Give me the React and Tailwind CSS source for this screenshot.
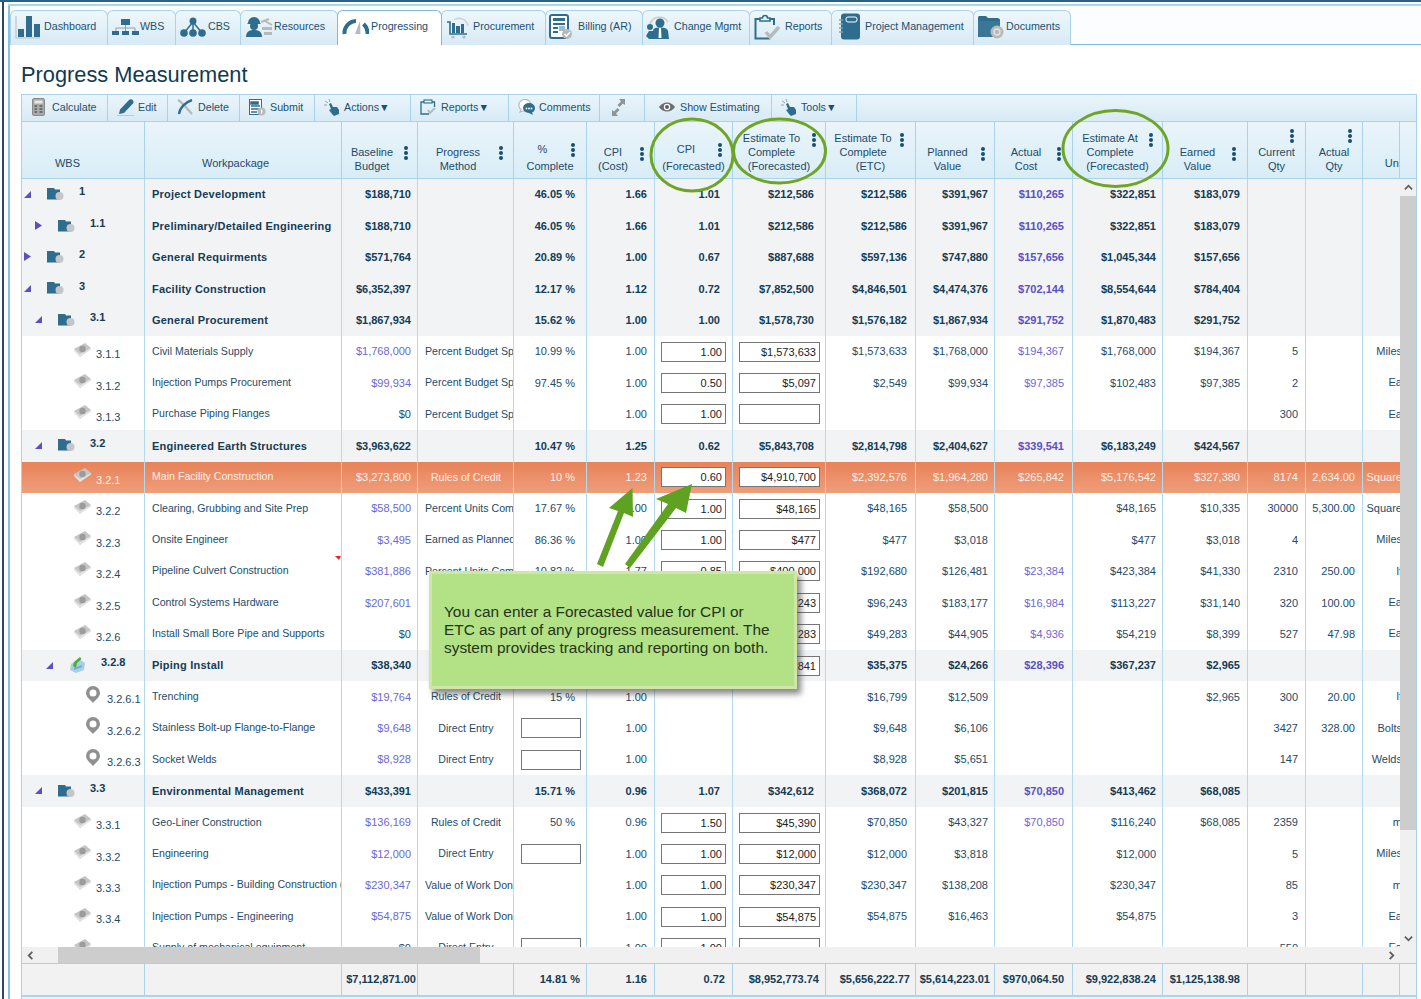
import React from "react";

const B = "#2f6d8e";
const G = "#b7babb";

const Svg = ({ w, h, vb, children }) => (
  <svg width={w} height={h} viewBox={vb || `0 0 ${w} ${h}`} className="block shrink-0">{children}</svg>
);

const Ic = {
  dash: () => (
    <Svg w={26} h={26}>
      <path d="M1 2V24H25" fill="none" stroke="#c9cccd" strokeWidth="1.5" />
      <rect x="3" y="15" width="6" height="8" fill={B} />
      <rect x="11" y="2" width="6" height="21" fill={B} />
      <rect x="19" y="10" width="6" height="13" fill={B} />
    </Svg>
  ),
  wbs: () => (
    <Svg w={27} h={18}>
      <rect x="9" y="1" width="9" height="6" fill={B} />
      <path d="M13.5 7V10M4 13V10H23V13M13.5 10V13" fill="none" stroke="#8f9ea6" strokeWidth="1" />
      <rect x="0" y="13" width="7" height="4" fill={B} />
      <rect x="10" y="13" width="7" height="4" fill={B} />
      <rect x="20" y="13" width="7" height="4" fill={B} />
    </Svg>
  ),
  cbs: () => (
    <Svg w={26} h={22}>
      <path d="M13 6L4 17M13 6V17M13 6L22 17" stroke={B} strokeWidth="1.5" />
      <circle cx="13" cy="5" r="3.5" fill={B} />
      <circle cx="4" cy="17" r="3.8" fill={B} />
      <circle cx="13" cy="17" r="3.8" fill={B} />
      <circle cx="22" cy="17" r="3.8" fill={B} />
    </Svg>
  ),
  res: () => (
    <Svg w={28} h={22}>
      <path d="M16 6L24 3M20 5L27 9" stroke={G} strokeWidth="2" />
      <rect x="17" y="11" width="10" height="3" fill={G} />
      <rect x="19" y="16" width="8" height="3" fill={G} />
      <path d="M3 7A6 6 0 0 1 15 7L16 8H2Z" fill={B} />
      <circle cx="9" cy="10" r="4" fill={B} />
      <path d="M1 21C1 15 5 14 9 14S17 15 17 21Z" fill={B} />
    </Svg>
  ),
  gauge: () => (
    <Svg w={27} h={17}>
      <path d="M2.5 16A12 12 0 0 1 14 3" fill="none" stroke={B} strokeWidth="4" />
      <path d="M13 16L18 3L18.5 16Z" fill={G} />
      <path d="M21.5 6A13 13 0 0 1 25.5 16" fill="none" stroke={B} strokeWidth="4" />
    </Svg>
  ),
  proc: () => (
    <Svg w={24} h={25}>
      <path d="M8 6A9 9 0 0 1 22 12" fill="none" stroke="#cfd2d3" strokeWidth="1.5" />
      <path d="M1 8H4V20H21" fill="none" stroke={B} strokeWidth="1.6" />
      <rect x="6" y="9" width="3" height="10" fill={B} />
      <rect x="10" y="12" width="4" height="7" fill={B} />
      <rect x="15" y="10" width="3" height="9" fill={B} />
      <circle cx="7" cy="23" r="1.6" fill={G} />
      <circle cx="18" cy="23" r="1.6" fill={G} />
    </Svg>
  ),
  bill: () => (
    <Svg w={24} h={26}>
      <rect x="1" y="1" width="18" height="23" rx="2" fill="#fff" stroke={B} strokeWidth="2" />
      <rect x="4" y="4" width="12" height="3" fill={B} />
      <path d="M4 10H16M4 14H9M4 18H9" stroke={B} strokeWidth="2" />
      <rect x="10" y="12" width="6" height="5" fill="#9dbccb" />
      <circle cx="18" cy="20" r="5" fill={G} />
      <path d="M15.5 20L17.5 22L21 18" fill="none" stroke="#fff" strokeWidth="1.3" />
    </Svg>
  ),
  chg: () => (
    <Svg w={25} h={26}>
      <path d="M4 10A10 10 0 0 1 22 8" fill="none" stroke="#c9cccd" strokeWidth="1.6" />
      <circle cx="14" cy="9" r="4.5" fill={B} />
      <path d="M7 25V17C7 14 10 13.5 14 13.5S21 14 22 17L23 25Z" fill={B} />
      <path d="M13 14H15L15.5 24H12.5Z" fill="#fff" />
      <circle cx="4" cy="13" r="3" fill={B} />
      <path d="M0 22L3 17H7L8 25H3Z" fill={B} />
    </Svg>
  ),
  rep: () => (
    <Svg w={26} h={26}>
      <path d="M6 5H1.5V24.5H16M16 5H20V11" fill="none" stroke={B} strokeWidth="2" />
      <path d="M6 7V4H8.5A2.5 2.5 0 0 1 13.500 4H16V7Z" fill="none" stroke={B} strokeWidth="1.6" />
      <path d="M12 18L16 23L25 13" fill="none" stroke={G} strokeWidth="3.4" />
    </Svg>
  ),
  pm: () => (
    <Svg w={22} h={27}>
      <rect x="2" y="0.500" width="19" height="26" rx="3" fill={B} />
      <rect x="7" y="4" width="11" height="5" rx="2" fill="none" stroke="#fff" strokeWidth="1" />
      <path d="M0 7H4M0 11H4M0 15H4M0 19H4" stroke="#7fa4b6" strokeWidth="1.4" />
    </Svg>
  ),
  doc: () => (
    <Svg w={27} h={24}>
      <path d="M1 3C1 1 2 1 3 1H9L11 3H20C22 3 23 4 23 5V22H1Z" fill={B} />
      <rect x="1" y="6" width="22" height="16" fill="#3a7797" />
      <circle cx="20" cy="17" r="6.500" fill={G} />
      <circle cx="20" cy="17" r="3" fill="none" stroke="#e3e3e3" strokeWidth="1.4" />
    </Svg>
  ),
  calc: () => (
    <Svg w={13} h={18}>
      <rect x="0.500" y="0.500" width="12" height="17" rx="1.500" fill="#a9aaa9" stroke="#8a8b8a" />
      <rect x="2.500" y="2.500" width="8" height="3" fill="#e7e7e7" />
      <path d="M2.500 8H5M7.500 8H10.500M2.500 11H5M7.500 11H10.500M2.500 14H5M7.500 14H10.500" stroke="#5a5a5a" strokeWidth="1.600" />
    </Svg>
  ),
  edit: () => (
    <Svg w={18} h={18}>
      <path d="M3 11.500L12 2C13 1 15 1 16 2.500S16.500 5 16 5.500L7 15L2 16Z" fill={B} />
      <path d="M0 17.500H17" stroke="#c5c8c9" strokeWidth="1" />
    </Svg>
  ),
  del: () => (
    <Svg w={16} h={16}>
      <path d="M1 1C5 3 11 11 15 15" stroke={G} strokeWidth="2.400" fill="none" />
      <path d="M15 1C9 3 3 8 2 15" stroke={B} strokeWidth="2.400" fill="none" />
    </Svg>
  ),
  sub: () => (
    <Svg w={17} h={17}>
      <rect x="0.500" y="0.500" width="12" height="15" fill="#fff" stroke={B} />
      <path d="M2 3H9V5H2ZM2 7H11M2 10H11M2 13H8" stroke={B} strokeWidth="1.500" fill={B} />
      <circle cx="12.500" cy="12.500" r="4" fill={G} />
      <rect x="12" y="10.500" width="1.300" height="4" fill="#fff" />
    </Svg>
  ),
  hand: () => (
    <Svg w={17} h={17}>
      <path d="M1 2L4 4M0 6H3M5 0L6 3" stroke="#9da3a6" strokeWidth="1" />
      <path d="M5 5L7 4L9 8L13 8L15 11L15 15L10 17L8 15L5 11L7 10Z" fill={B} />
    </Svg>
  ),
  rep2: () => (
    <Svg w={16} h={16}>
      <path d="M4 3H1V15H9M12 3H14.500V8" fill="none" stroke={B} strokeWidth="1.300" />
      <rect x="4" y="1" width="8" height="3" fill="none" stroke={B} strokeWidth="1.100" />
      <path d="M8 11L10 14L15 9" fill="none" stroke={G} strokeWidth="2" />
    </Svg>
  ),
  com: () => (
    <Svg w={17} h={16}>
      <path d="M1 7A6 5.500 0 0 1 13 5L10 12H5L2 13L3 10.500C1.500 9.500 1 8.500 1 7Z" fill="#fff" stroke={G} strokeWidth="1.200" />
      <path d="M5 9A6 5 0 0 1 17 9C17 11.500 15.500 13 14 13.500L15 16L11 14A6 5 0 0 1 5 9Z" fill={B} />
      <circle cx="8.500" cy="9.500" r="0.900" fill="#fff" />
      <circle cx="11" cy="9.500" r="0.900" fill="#fff" />
      <circle cx="13.500" cy="9.500" r="0.900" fill="#fff" />
    </Svg>
  ),
  exp: () => (
    <Svg w={13} h={17}>
      <path d="M7 0H13V6L11 4.500L7.500 8L5.500 6L9 2.500Z" fill="#8f9496" />
      <path d="M6 17H0V11L2 12.500L5.500 9L7.500 11L4 14.500Z" fill="#8f9496" />
    </Svg>
  ),
  eye: () => (
    <Svg w={16} h={10}>
      <path d="M0 5C4 -1 12 -1 16 5C12 11 4 11 0 5Z" fill="#6b6f71" />
      <circle cx="8" cy="5" r="3.200" fill="#fff" />
      <circle cx="8" cy="5" r="2" fill="#5c6062" />
    </Svg>
  ),
};

const Folder = () => (
  <Svg w={17} h={12}>
    <path d="M0 0H7L8 1.500H13V11.500H0Z" fill={B} />
    <circle cx="12.500" cy="8" r="4" fill="#c4c6c7" />
  </Svg>
);
const GreenBox = () => (
  <Svg w={17} h={16}>
    <path d="M2 7L10 2L16 6L15 13L7 16L1 13Z" fill="#a9cfe4" />
    <path d="M4 9L5 5L11 0L12.500 2L8 6L7 11Z" fill="#48b13c" />
    <path d="M5 12L13 9" stroke="#6ba7c9" strokeWidth="1.500" />
  </Svg>
);
const Leaf = () => (
  <Svg w={17} h={14}>
    <path d="M0 6L11 0L17 5L6 14Z" fill="#c4c5c5" />
    <path d="M0 6L6 11L17 5V6.500L6 14L0 8Z" fill="#e2e2e2" />
    <circle cx="8.500" cy="6" r="3.200" fill="#9b9c9c" />
  </Svg>
);
const Pin = () => (
  <Svg w={14} h={17}>
    <path fillRule="evenodd" d="M7 0A7 7 0 0 1 14 7C14 11 9.500 14 7 17C4.500 14 0 11 0 7A7 7 0 0 1 7 0ZM7 3.500A3.500 3.500 0 1 0 7 10.500A3.500 3.500 0 1 0 7 3.500Z" fill="#8f9090" />
  </Svg>
);

const Kebab = ({ cls }) => (
  <div className={`absolute flex flex-col gap-[1.5px] ${cls}`}>
    <span className="block w-[3.5px] h-[3.5px] rounded-full bg-[#17506f]" />
    <span className="block w-[3.5px] h-[3.5px] rounded-full bg-[#17506f]" />
    <span className="block w-[3.5px] h-[3.5px] rounded-full bg-[#17506f]" />
  </div>
);

const tabs = [
  ["Dashboard", "w-[98px]", Ic.dash, "pl-[4px]", "w-[29px]"],
  ["WBS", "w-[69px]", Ic.wbs, "pl-[4px]", "w-[28px]"],
  ["CBS", "w-[66px]", Ic.cbs, "pl-[4px]", "w-[28px]"],
  ["Resources", "w-[98px]", Ic.res, "pl-[4px]", "w-[29px]"],
  ["Progressing", "w-[105px]", Ic.gauge, "pl-[4px]", "w-[29px]"],
  ["Procurement", "w-[105px]", Ic.proc, "pl-[4px]", "w-[27px]"],
  ["Billing (AR)", "w-[98px]", Ic.bill, "pl-[3px]", "w-[29px]"],
  ["Change Mgmt", "w-[108px]", Ic.chg, "pl-[3px]", "w-[28px]"],
  ["Reports", "w-[83px]", Ic.rep, "pl-[4px]", "w-[31px]"],
  ["Project Management", "w-[143px]", Ic.pm, "pl-[7px]", "w-[26px]"],
  ["Documents", "w-[98px]", Ic.doc, "pl-[3px]", "w-[29px]"],
];

const tools = [
  ["Calculate", "w-[86px]", Ic.calc, "pl-[10px]", "w-[20px]"],
  ["Edit", "w-[60px]", Ic.edit, "pl-[9px]", "w-[21px]"],
  ["Delete", "w-[72px]", Ic.del, "pl-[9px]", "w-[21px]"],
  ["Submit", "w-[75px]", Ic.sub, "pl-[9px]", "w-[21px]"],
  ["Actions▼", "w-[96px]", Ic.hand, "pl-[9px]", "w-[20px]"],
  ["Reports▼", "w-[98px]", Ic.rep2, "pl-[9px]", "w-[21px]"],
  ["Comments", "w-[91px]", Ic.com, "pl-[9px]", "w-[21px]"],
  ["", "w-[45px]", Ic.exp, "pl-[12px]", "w-[21px]"],
  ["Show Estimating", "w-[127px]", Ic.eye, "pl-[14px]", "w-[21px]"],
  ["Tools▼", "w-[85px]", Ic.hand, "pl-[9px]", "w-[20px]"],
];

const COLS =
  "grid grid-cols-[123px_197px_76px_96px_73px_68px_78px_93px_90px_79px_78px_90px_85px_58px_57px_60px]";

const heads = [
  { l: [["WBS"]], pb: "pb-[8px] pr-[31px]" },
  { l: [["Workpackage"]], pb: "pb-[8px] pr-[15px]" },
  { l: [["Baseline", 1], ["Budget", 1]], k: "left-[62px] top-[24px]" },
  { l: [["Progress", 1], ["Method", 1]], k: "left-[81px] top-[24px]" },
  { l: [["%", 2], ["Complete"]], k: "left-[57px] top-[21px]", gap: true },
  { l: [["CPI", 1], ["(Cost)", 1]], k: "left-[53px] top-[25px]" },
  { l: [["CPI", 2], ["(Forecasted)"]], k: "left-[63px] top-[21px]", gap: true },
  { l: [["Estimate To", 1], ["Complete", 1], ["(Forecasted)"]], k: "left-[79px] top-[11px]" },
  { l: [["Estimate To", 1], ["Complete", 1], ["(ETC)"]], k: "left-[74px] top-[11px]" },
  { l: [["Planned", 1], ["Value", 1]], k: "left-[65px] top-[25px]" },
  { l: [["Actual", 1], ["Cost", 1]], k: "left-[62px] top-[25px]" },
  { l: [["Estimate At", 1], ["Complete", 1], ["(Forecasted)"]], k: "left-[76px] top-[11px]" },
  { l: [["Earned", 1], ["Value", 1]], k: "left-[69px] top-[25px]" },
  { l: [["Current"], ["Qty"]], k: "left-[42px] top-[7px]" },
  { l: [["Actual"], ["Qty"]], k: "left-[42px] top-[7px]" },
  { l: [["Unit"]], pb: "pb-[8px] pl-[4px]" },
];

// level, open, code, name, baseline, method, pct, cpi, cpiF, etcF, etc, pv, ac, eac, ev, cq, aq, unit
const g = (lvl, open, code, name, base, pct, cpi, cpiF, etcF, etc, pv, ac, eac, ev) => ({
  t: "g", lvl, open, code, name, v: [base, "", pct, cpi, cpiF, etcF, etc, pv, ac, eac, ev, "", "", ""],
});
const l = (code, name, ...v) => ({ t: "l", code, name, v });
const p = (code, name, ...v) => ({ t: "p", code, name, v });

const rows = [
  g(0, true, "1", "Project Development", "$188,710", "46.05 %", "1.66", "1.01", "$212,586", "$212,586", "$391,967", "$110,265", "$322,851", "$183,079"),
  g(1, false, "1.1", "Preliminary/Detailed Engineering", "$188,710", "46.05 %", "1.66", "1.01", "$212,586", "$212,586", "$391,967", "$110,265", "$322,851", "$183,079"),
  g(0, false, "2", "General Requirments", "$571,764", "20.89 %", "1.00", "0.67", "$887,688", "$597,136", "$747,880", "$157,656", "$1,045,344", "$157,656"),
  g(0, true, "3", "Facility Construction", "$6,352,397", "12.17 %", "1.12", "0.72", "$7,852,500", "$4,846,501", "$4,474,376", "$702,144", "$8,554,644", "$784,404"),
  g(1, true, "3.1", "General Procurement", "$1,867,934", "15.62 %", "1.00", "1.00", "$1,578,730", "$1,576,182", "$1,867,934", "$291,752", "$1,870,483", "$291,752"),
  l("3.1.1", "Civil Materials Supply", "$1,768,000", "Percent Budget Spent", "10.99 %", "1.00", "#1.00", "#$1,573,633", "$1,573,633", "$1,768,000", "$194,367", "$1,768,000", "$194,367", "5", "", "Miles"),
  l("3.1.2", "Injection Pumps Procurement", "$99,934", "Percent Budget Spent", "97.45 %", "1.00", "#0.50", "#$5,097", "$2,549", "$99,934", "$97,385", "$102,483", "$97,385", "2", "", "Ea"),
  l("3.1.3", "Purchase Piping Flanges", "$0", "Percent Budget Spent", "", "1.00", "#1.00", "#", "", "", "", "", "", "300", "", "Ea"),
  g(1, true, "3.2", "Engineered Earth Structures", "$3,963,622", "10.47 %", "1.25", "0.62", "$5,843,708", "$2,814,798", "$2,404,627", "$339,541", "$6,183,249", "$424,567"),
  { ...l("3.2.1", "Main Facility Construction", "$3,273,800", "Rules of Credit", "10 %", "1.23", "#0.60", "#$4,910,700", "$2,392,576", "$1,964,280", "$265,842", "$5,176,542", "$327,380", "8174", "2,634.00", "Square"), sel: true },
  l("3.2.2", "Clearing, Grubbing and Site Prep", "$58,500", "Percent Units Complete", "17.67 %", "1.00", "#1.00", "#$48,165", "$48,165", "$58,500", "", "$48,165", "$10,335", "30000", "5,300.00", "Square"),
  l("3.2.3", "Onsite Engineer", "$3,495", "Earned as Planned", "86.36 %", "1.00", "#1.00", "#$477", "$477", "$3,018", "", "$477", "$3,018", "4", "", "Miles"),
  { ...l("3.2.4", "Pipeline Culvert Construction", "$381,886", "Percent Units Complete", "10.82 %", "1.77", "#0.85", "#$400,000", "$192,680", "$126,481", "$23,384", "$423,384", "$41,330", "2310", "250.00", "lf"), mark: true },
  l("3.2.5", "Control Systems Hardware", "$207,601", "", "", "", "", "#$96,243", "$96,243", "$183,177", "$16,984", "$113,227", "$31,140", "320", "100.00", "Ea"),
  l("3.2.6", "Install Small Bore Pipe and Supports", "$0", "", "", "", "", "#$49,283", "$49,283", "$44,905", "$4,936", "$54,219", "$8,399", "527", "47.98", "Ea"),
  { ...g(2, true, "3.2.8", "Piping Install", "$38,340", "", "", "", "#$331,841", "$35,375", "$24,266", "$28,396", "$367,237", "$2,965"), green: true },
  p("3.2.6.1", "Trenching", "$19,764", "Rules of Credit", "15 %", "1.00", "", "", "$16,799", "$12,509", "", "", "$2,965", "300", "20.00", "lf"),
  p("3.2.6.2", "Stainless Bolt-up Flange-to-Flange", "$9,648", "Direct Entry", "#", "1.00", "", "", "$9,648", "$6,106", "", "", "", "3427", "328.00", "Bolts"),
  p("3.2.6.3", "Socket Welds", "$8,928", "Direct Entry", "#", "1.00", "", "", "$8,928", "$5,651", "", "", "", "147", "", "Welds"),
  g(1, true, "3.3", "Environmental Management", "$433,391", "15.71 %", "0.96", "1.07", "$342,612", "$368,072", "$201,815", "$70,850", "$413,462", "$68,085"),
  l("3.3.1", "Geo-Liner Construction", "$136,169", "Rules of Credit", "50 %", "0.96", "#1.50", "#$45,390", "$70,850", "$43,327", "$70,850", "$116,240", "$68,085", "2359", "", "m"),
  l("3.3.2", "Engineering", "$12,000", "Direct Entry", "#", "1.00", "#1.00", "#$12,000", "$12,000", "$3,818", "", "$12,000", "", "5", "", "Miles"),
  l("3.3.3", "Injection Pumps - Building Construction (", "$230,347", "Value of Work Done", "", "1.00", "#1.00", "#$230,347", "$230,347", "$138,208", "", "$230,347", "", "85", "", "m"),
  l("3.3.4", "Injection Pumps - Engineering", "$54,875", "Value of Work Done", "", "1.00", "#1.00", "#$54,875", "$54,875", "$16,463", "", "$54,875", "", "3", "", "Ea"),
  l("3.3.5", "Supply of mechanical equipment", "$0", "Direct Entry", "#", "1.00", "#1.00", "#", "", "", "", "", "", "550", "", "Ea"),
];

const pads = [
  "pr-[6px]", "", "pr-[11px]", "pr-[7px]", "pr-[12px]", "pr-[11px]", "pr-[8px]", "pr-[6px]", "pr-[8px]", "pr-[6px]", "pr-[7px]", "pr-[7px]", "pr-[7px]", "",
];
const inpCls = ["", "", "w-[60px] ml-[7px]", "", "w-[65px] ml-[6px]", "w-[81px] ml-[6px]"];

const Input = ({ v, cls }) => (
  <input
    readOnly
    value={v}
    className={`block h-[20px] bg-white border border-[#767676] pr-[3px] text-right text-[11px] text-[#222] font-normal outline-none ${cls}`}
  />
);

const Row = ({ r }) => {
  const sel = r.sel;
  const group = r.t === "g";
  const bg = sel
    ? "bg-gradient-to-b from-[#e8825a] to-[#ee9e7a] text-[#fdeee6]"
    : group
    ? "bg-[#f1f3f5] text-[#143c55] font-bold"
    : "bg-white text-[#1d4b68]";
  const lvlPad = group ? ["pl-[2px]", "pl-[13px]", "pl-[24px]"][r.lvl] : "";
  return (
    <div className={`${COLS} h-[31.4px] ${bg}`}>
      <div className="border-r border-[#b4daed] flex items-center overflow-hidden">
        {group ? (
          <div className={`flex items-center ${lvlPad}`}>
            <div className="w-[7px] mb-[1px]">
              {r.open ? (
                <Svg w={7} h={7}><path d="M7 0V7H0Z" fill="#5a50c4" /></Svg>
              ) : (
                <Svg w={7} h={9}><path d="M0 0L7 4.500L0 9Z" fill="#5a50c4" /></Svg>
              )}
            </div>
            <div className="ml-[16px] mb-[1px]">{r.green ? <GreenBox /> : <Folder />}</div>
            <div className="ml-[15px] mb-[6px] text-[11px]">{r.code}</div>
          </div>
        ) : r.t === "l" ? (
          <div className="flex items-center pl-[52px]">
            <div className="mb-[4px]"><Leaf /></div>
            <div className="ml-[5px] mt-[6px]">{r.code}</div>
          </div>
        ) : (
          <div className="flex items-center pl-[64px]">
            <div className="mb-[5px]"><Pin /></div>
            <div className="ml-[7px] mt-[5px]">{r.code}</div>
          </div>
        )}
      </div>
      <div className={`relative border-r border-[#b4daed] flex items-center pl-[7px] whitespace-nowrap overflow-hidden ${group ? "tracking-[0.22px]" : "text-[10.6px]"}`}>
        {r.name}
        {r.mark && (
          <div className="absolute top-0 right-0">
            <Svg w={6} h={4}><path d="M0 0H6L4 4Z" fill="#e8232a" /></Svg>
          </div>
        )}
      </div>
      {r.v.map((v, i) => {
        const isMethod = i === 1;
        const isUnit = i === 13;
        const isInput = typeof v === "string" && v.startsWith("#");
        const link = !group && !sel && ((i === 0 && v !== "$0") || i === 8);
        const linkB = group && i === 8;
        const color = link ? "text-[#6c68d4]" : linkB ? "text-[#5a50c4]" : "";
        if (isMethod)
          return (
            <div key={i} className="border-r border-[#b4daed] leading-[31.4px] pl-[7px] pr-[6px] text-[10.6px] text-center whitespace-nowrap overflow-hidden">
              {v}
            </div>
          );
        if (isUnit)
          return (
            <div key={i} className="leading-[31.4px] pr-[21px] text-right whitespace-nowrap overflow-hidden">
              {v}
            </div>
          );
        if (isInput)
          return (
            <div key={i} className="border-r border-[#b4daed] flex items-center">
              <Input v={v.slice(1)} cls={inpCls[i]} />
            </div>
          );
        return (
          <div key={i} className={`border-r border-[#b4daed] flex items-center justify-end whitespace-nowrap ${pads[i]} ${color}`}>
            {v}
          </div>
        );
      })}
    </div>
  );
};

const foot = ["", "", "$7,112,871.00", "", "14.81 %", "1.16", "0.72", "$8,952,773.74", "$5,656,222.77", "$5,614,223.01", "$970,064.50", "$9,922,838.24", "$1,125,138.98", "", "", ""];
const footPad = ["", "", "pr-[1px]", "", "pr-[6px]", "pr-[7px]", "pr-[7px]", "pr-[6px]", "pr-[5px]", "pr-[4px]", "pr-[8px]", "pr-[6px]", "pr-[7px]", "", "", ""];

const Chevron = ({ d }) => (
  <svg width="9" height="9" viewBox="0 0 10 10" className="block">
    <path d={d} fill="none" stroke="#5f5f5f" strokeWidth="2" />
  </svg>
);

export default function App() {
  return (
    <div className="relative w-[1421px] h-[999px] overflow-hidden bg-white font-['Liberation_Sans',Arial,sans-serif] text-[11px] flex flex-col">
      <div className="h-[2px] bg-[#2a6283] shrink-0" />
      <div className="flex flex-1 min-h-0">
        <div className="w-[8px] shrink-0 pl-[2px]">
          <div className="w-[1.5px] h-full bg-[#2c4a5e]" />
        </div>
        <div className="flex-1 min-w-0 flex flex-col">
          <div className="h-[2px] mt-[2px] bg-[#a9d6ea] shrink-0" />
          <div className="flex-1 min-h-0 flex flex-col border-l-2 border-[#82c4e2]">
            {/* tabs */}
            <div className="h-[39px] pt-[3px] flex items-end border-b border-[#7dbbd9] bg-[#fbfdfe] shrink-0">
              {tabs.map(([label, w, I, pl, iw]) => {
                const active = label === "Progressing";
                return (
                  <div
                    key={label}
                    className={`${w} h-[35px] -mb-px flex items-center pb-[3px] ${pl} rounded-t-[6px] border border-b-0 -mr-px text-[10.7px] ${
                      active
                        ? "bg-white border-[#7dbbd9] text-[#15506f] z-10"
                        : "bg-gradient-to-b from-[#eef7fb] to-[#d8eaf5] border-[#a8d3e8] text-[#1c5070]"
                    }`}
                  >
                    <div className={`${iw} shrink-0`}><I /></div>
                    <span className="whitespace-nowrap">{label}</span>
                  </div>
                );
              })}
            </div>
            {/* content */}
            <div className="flex-1 min-h-0 pl-[11px] pr-[4px] flex flex-col">
              <h1 className="h-[49px] shrink-0 flex items-center pt-[11px] text-[21.8px] leading-none text-[#0f3a52] font-normal">
                Progress Measurement
              </h1>
              <div className="h-[28px] shrink-0 flex border border-[#a8d3e8] bg-gradient-to-b from-[#eaf5fb] to-[#d8eaf5]">
                {tools.map(([label, w, I, pl, iw], idx) => (
                  <div key={idx} className={`${w} flex items-center pb-[2px] ${pl} border-r border-[#a8d3e8] text-[#1c5070] text-[10.7px]`}>
                    <div className={`${iw} shrink-0`}><I /></div>
                    <span className="whitespace-nowrap">{label}</span>
                  </div>
                ))}
              </div>
              {/* table */}
              <div className="flex-1 min-h-0 flex flex-col border-x border-[#a8d3e8] text-[#1d4b68]">
                <div className="h-[57px] shrink-0 flex border-b border-[#a8d3e8] bg-gradient-to-b from-[#eaf4fa] to-[#d9edf7]">
                  <div className={`${COLS} w-[1378px] overflow-hidden border-r border-[#a8d3e8]`}>
                    {heads.map((h, i) => (
                      <div
                        key={i}
                        className={`relative border-r border-[#a8d3e8] flex flex-col items-center justify-end leading-[14px] whitespace-nowrap overflow-hidden ${h.pb || "pb-[5px]"}`}
                      >
                        {h.l.map(([t, shift], j) => (
                          <span
                            key={j}
                            className={`${shift ? "pr-[15px]" : ""} ${h.gap && j === 0 ? "mb-[3px]" : ""}`}
                          >
                            {t}
                          </span>
                        ))}
                        {h.k && <Kebab cls={h.k} />}
                      </div>
                    ))}
                  </div>
                  <div className="w-[16px]" />
                </div>
                <div className="h-[768px] shrink-0 flex">
                  <div className="w-[1378px] overflow-hidden">
                    {rows.map((r, i) => (
                      <Row key={i} r={r} />
                    ))}
                  </div>
                  <div className="w-[16px] bg-[#f0f0f0] flex flex-col items-center">
                    <div className="h-[17px] flex items-center justify-center">
                      <Chevron d="M1 7L5 3L9 7" />
                    </div>
                    <div className="w-full h-[634px] bg-[#cdcdcd]" />
                    <div className="flex-1 flex items-end pb-[4px]">
                      <Chevron d="M1 3L5 7L9 3" />
                    </div>
                  </div>
                </div>
                <div className="h-[16px] shrink-0 bg-[#f0f0f0] flex items-center">
                  <div className="w-[36px] pl-[4px]"><Chevron d="M7 1L3 5L7 9" /></div>
                  <div className="w-[422px] h-full bg-[#cdcdcd]" />
                  <div className="flex-1 flex justify-end pr-[20px]"><Chevron d="M3 1L7 5L3 9" /></div>
                </div>
                <div className="h-[32px] shrink-0 flex border-t border-[#a8d3e8] bg-[#f2f2f2] font-bold text-[#143c55]">
                  <div className={`${COLS} w-[1378px] overflow-hidden border-r border-[#a8d3e8]`}>
                    {foot.map((v, i) => (
                      <div key={i} className={`border-r border-[#a8d3e8] flex items-center justify-end whitespace-nowrap ${footPad[i]}`}>
                        {v}
                      </div>
                    ))}
                  </div>
                  <div className="w-[16px]" />
                </div>
                <div className="h-[2px] shrink-0 bg-[#a9d6ea]" />
                <div className="flex-1 bg-[#e8f4fa]" />
              </div>
            </div>
          </div>
        </div>
      </div>

      {/* annotations */}
      <svg width="1421" height="999" viewBox="0 0 1421 999" className="absolute inset-0 pointer-events-none">
        <g fill="none" stroke="#6fa524" strokeWidth="3">
          <ellipse cx="692" cy="155" rx="41" ry="36" />
          <ellipse cx="779.500" cy="151" rx="46" ry="32" />
          <ellipse cx="1115.500" cy="148.500" rx="52.500" ry="38" />
        </g>
        <polygon points="597,564 603,567 624,513 633,517 632.500,488 609,508 618,511" fill="#5fa222" />
        <polygon points="625,564 630,568 676,508 686,513 692,484 656,499 668,504" fill="#5fa222" />
      </svg>
      <div className="absolute left-[429px] top-[571px] w-[368px] h-[118px] flex items-center pl-[12px] pr-[19px] bg-[#b2e186] border-[3px] border-[#cfe6a8] shadow-[4px_5px_6px_rgba(60,60,60,0.6)] text-[15.4px] leading-[18px] text-[#25331a]">
        You can enter a Forecasted value for CPI or ETC as part of any progress measurement. The system provides tracking and reporting on both.
      </div>
    </div>
  );
}
